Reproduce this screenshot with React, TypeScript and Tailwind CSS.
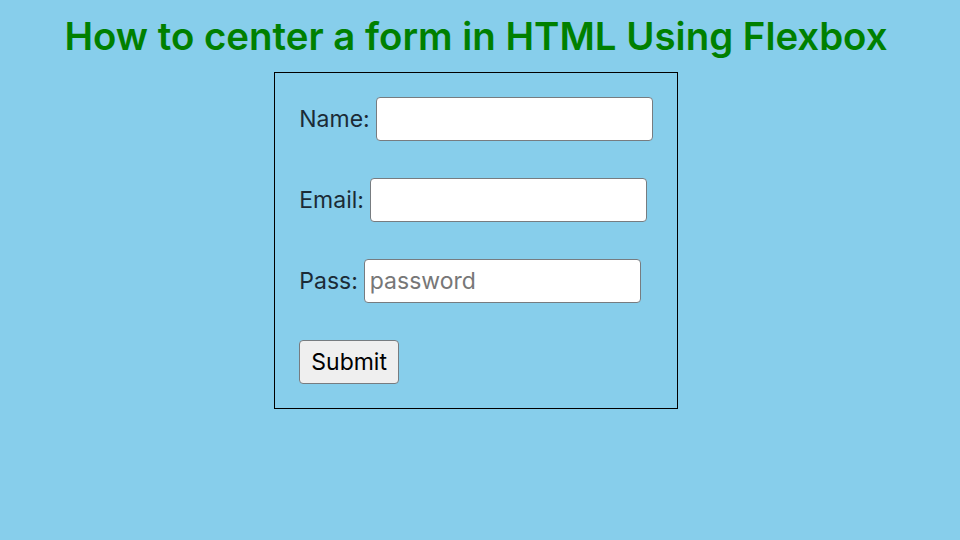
import type { ReactNode } from 'react';

function Row({ label, children }: { label: string; children: ReactNode }) {
  return (
    <div className="flex items-center gap-[6px]">
      <label className="text-[23px] text-[#1b2b36]">{label}</label>
      {children}
    </div>
  );
}

function TextInput({ type = 'text', placeholder }: { type?: string; placeholder?: string }) {
  return (
    <input
      type={type}
      placeholder={placeholder}
      className="h-[44px] w-[277px] rounded-[4px] border border-[#777c80] bg-white px-[5px] text-[23px] text-black placeholder:text-[#777] outline-none"
    />
  );
}

export default function App() {
  return (
    <div className="flex min-h-[540px] flex-col items-center bg-[#87ceeb] font-['Inter','Liberation_Sans',sans-serif]">
      <h1 className="mr-[8px] mt-[10px] text-[38.4px] font-semibold leading-[52px] text-[#008000]">
        How to center a form in HTML Using Flexbox
      </h1>
      <div className="mr-[8px] mt-[10px] flex flex-col gap-[37px] border border-black p-[24px]">
        <Row label="Name:">
          <TextInput />
        </Row>
        <Row label="Email:">
          <TextInput type="email" />
        </Row>
        <Row label="Pass:">
          <TextInput type="password" placeholder="password" />
        </Row>
        <div>
          <button className="h-[44px] rounded-[4px] border border-[#777c80] bg-[#efefef] px-[11px] text-[23px] text-black">
            Submit
          </button>
        </div>
      </div>
    </div>
  );
}
